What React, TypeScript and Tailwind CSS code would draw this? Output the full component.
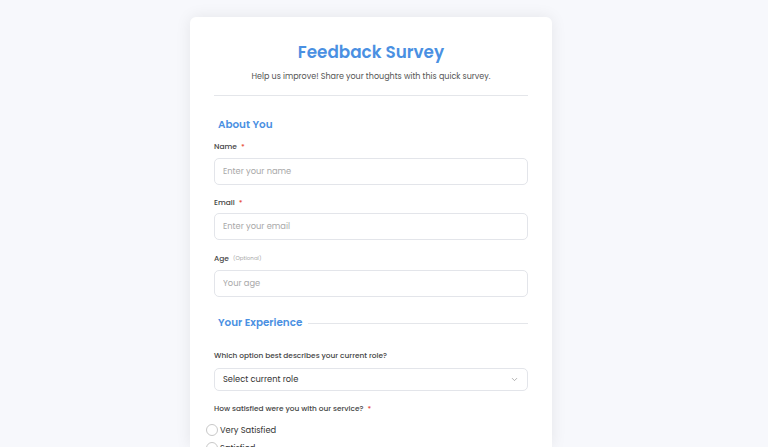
import React from 'react'

const font = { fontFamily: 'Poppins, Inter, "Noto Sans", sans-serif' }

const Label: React.FC<{ text: string; required?: boolean; optional?: boolean }> = ({ text, required, optional }) => (
  <div className="flex items-center text-[7.5px] font-medium text-[#444] mb-[6px] leading-none">
    <span>{text}</span>
    {required && <span className="text-[#e74c3c] ml-[4px]">*</span>}
    {optional && <span className="text-[5.5px] text-[#aaa] font-normal ml-[4px]">(Optional)</span>}
  </div>
)

const Input: React.FC<{ placeholder: string }> = ({ placeholder }) => (
  <input
    type="text"
    placeholder={placeholder}
    className="w-full h-[27px] px-[8px] border border-[#e3e5ea] rounded-[5px] text-[8.3px] text-[#333] placeholder:text-[#a8a8a8] bg-white focus:outline-none"
  />
)

export default function App() {
  return (
    <div className="h-[447px] bg-[#f7f8fc] flex pl-[190px] pt-[17px] overflow-hidden" style={font}>
      <div className="w-[362px] shrink-0 bg-white rounded-t-[6px] shadow-[0_0_16px_rgba(0,0,0,0.08)] px-[24px] pt-[24px] pb-4">
        {/* header */}
        <div className="text-center pb-[12px] border-b border-[#e4e6ea]">
          <h1 className="text-[16.8px] font-semibold text-[#4a90e2] leading-[22px]">Feedback Survey</h1>
          <p className="text-[8px] text-[#555] mt-[8px] leading-[12px]">Help us improve! Share your thoughts with this quick survey.</p>
        </div>

        {/* about you */}
        <div className="pl-[4px] mt-[24px] text-[10.4px] font-semibold text-[#4a90e2] leading-none">About You</div>

        <div className="mt-[13px]">
          <Label text="Name" required />
          <Input placeholder="Enter your name" />
        </div>
        <div className="mt-[14px]">
          <Label text="Email" required />
          <Input placeholder="Enter your email" />
        </div>
        <div className="mt-[15px]">
          <Label text="Age" optional />
          <Input placeholder="Your age" />
        </div>

        {/* experience */}
        <div className="flex items-center gap-[6px] pl-[4px] mt-[21px]">
          <span className="text-[10.4px] font-semibold text-[#4a90e2] leading-none whitespace-nowrap">Your Experience</span>
          <div className="flex-1 h-px bg-[#e4e6ea]" />
        </div>

        <div className="mt-[24px]">
          <div className="text-[7.4px] font-medium text-[#444] mb-[8px] leading-none">Which option best describes your current role?</div>
          <div className="flex items-center justify-between h-[23px] px-[8px] border border-[#e3e5ea] rounded-[5px]">
            <span className="text-[8.3px] text-[#333]">Select current role</span>
            <svg width="9" height="9" viewBox="0 0 24 24" fill="none" stroke="#999" strokeWidth="2" strokeLinecap="round" strokeLinejoin="round">
              <path d="M6 9l6 6 6-6" />
            </svg>
          </div>
        </div>

        <div className="mt-[14px]">
          <div className="flex items-center text-[7.4px] font-medium text-[#444] leading-none">
            <span>How satisfied were you with our service?</span>
            <span className="text-[#e74c3c] ml-[4px]">*</span>
          </div>
          <div className="-ml-[8px] mt-[12px] flex flex-col gap-[6px]">
            {['Very Satisfied', 'Satisfied', 'Neutral'].map(o => (
              <label key={o} className="flex items-center gap-[2px] text-[8.3px] text-[#333] leading-[12px]">
                <span className="w-[12px] h-[12px] rounded-full border border-[#c8c8c8] bg-white" />
                <span>{o}</span>
              </label>
            ))}
          </div>
        </div>
      </div>
    </div>
  )
}
